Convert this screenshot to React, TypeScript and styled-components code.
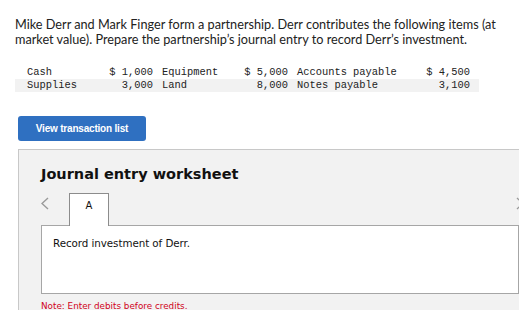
import { FC } from 'react';
import styled, { createGlobalStyle } from 'styled-components';

const GlobalStyle = createGlobalStyle`
    html, body {
        margin: 0;
        padding: 0;
        background: #ffffff;
        overflow: hidden;
    }
`;

const Page = styled.div`
    width: 519px;
    height: 310px;
    overflow: hidden;
    padding: 17px 0 0 15px;
    box-sizing: border-box;
`;

const Question = styled.p`
    margin: 0;
    width: 500px;
    font-family: Lato, 'Open Sans', sans-serif;
    font-size: 12.7px;
    line-height: 15px;
    color: #222222;
`;

const ItemTable = styled.div`
    margin-top: 19px;
    width: 464px;
    font-family: 'Liberation Mono', 'Courier New', monospace;
    font-size: 10.4px;
    color: #222222;
`;

const ItemRow = styled.div<{ $shaded?: boolean }>`
    display: grid;
    grid-template-columns: 91px 51px 83px 52px 128px 59px;
    height: 13px;
    line-height: 13px;
    background: ${({ $shaded }) => ($shaded ? '#f2f2f2' : 'transparent')};
`;

const Label = styled.span<{ $first?: boolean }>`
    padding-left: ${({ $first }) => ($first ? '12px' : '5px')};
    white-space: pre;
`;

const Amount = styled.span<{ $last?: boolean }>`
    text-align: right;
    padding-right: ${({ $last }) => ($last ? '9px' : '4px')};
    white-space: pre;
`;

const ViewButton = styled.button`
    display: block;
    margin: 24px 0 0 3px;
    width: 128px;
    height: 25px;
    padding: 0;
    border: none;
    border-radius: 3px;
    background: #2f70c1;
    color: #ffffff;
    font-family: 'Liberation Sans', Arial, sans-serif;
    font-weight: bold;
    font-size: 10px;
    letter-spacing: -0.2px;
    cursor: pointer;
`;

const Worksheet = styled.div`
    margin: 8px 0 0 3px;
    width: 540px;
    height: 200px;
    box-sizing: border-box;
    background: #f2f2f2;
    border-top: 1px solid #c8c8c8;
    border-left: 1px solid #c8c8c8;
    padding: 15px 0 0 22px;
`;

const Title = styled.h2`
    margin: 0;
    font-family: 'DejaVu Sans', Verdana, sans-serif;
    font-weight: bold;
    font-size: 14.5px;
    line-height: 18px;
    color: #111111;
`;

const TabBar = styled.div`
    display: flex;
    align-items: flex-start;
    margin-top: 10px;
    width: 483px;
    height: 32px;
`;

const Chevron = styled.span<{ $right?: boolean }>`
    display: flex;
    width: 28px;
    justify-content: ${({ $right }) => ($right ? 'flex-end' : 'flex-start')};
    padding-top: 4px;
    ${({ $right }) => ($right ? 'margin-left: auto;' : '')}
`;

const Tab = styled.div`
    width: 40px;
    height: 33px;
    box-sizing: border-box;
    background: #ffffff;
    border: 1px solid #8c8c8c;
    border-bottom: none;
    text-align: center;
    padding-top: 6px;
    font-family: 'DejaVu Sans', Verdana, sans-serif;
    font-size: 10px;
    color: #111111;
    position: relative;
    z-index: 1;
`;

const EntryBox = styled.div`
    width: 478px;
    height: 69px;
    box-sizing: border-box;
    background: #ffffff;
    border: 1px solid #a6a6a6;
    padding: 11px 0 0 11px;
    font-family: 'DejaVu Sans', Verdana, sans-serif;
    font-size: 10.3px;
    letter-spacing: -0.05px;
    color: #111111;
`;

const Note = styled.div`
    margin-top: 7px;
    font-family: 'DejaVu Sans', Verdana, sans-serif;
    font-size: 8.8px;
    color: #d0021b;
`;

type Item = { label: string; amount: string };

const rows: Item[][] = [
    [
        { label: 'Cash', amount: '$ 1,000' },
        { label: 'Equipment', amount: '$ 5,000' },
        { label: 'Accounts payable', amount: '$ 4,500' },
    ],
    [
        { label: 'Supplies', amount: '3,000' },
        { label: 'Land', amount: '8,000' },
        { label: 'Notes payable', amount: '3,100' },
    ],
];

const ChevronIcon: FC<{ right?: boolean }> = ({ right }) => (
    <svg width="8" height="13" viewBox="0 0 8 13">
        <polyline
            points={right ? '1,1 7,6.5 1,12' : '7,1 1,6.5 7,12'}
            fill="none"
            stroke="#9a9a9a"
            strokeWidth="1.4"
        />
    </svg>
);

const App: FC = () => (
    <Page>
        <GlobalStyle />
        <Question>
            Mike Derr and Mark Finger form a partnership. Derr contributes the following items (at
            market value). Prepare the partnership’s journal entry to record Derr’s investment.
        </Question>
        <ItemTable>
            {rows.map((row, i) => (
                <ItemRow key={i} $shaded={i === 1}>
                    {row.map((item, j) => [
                        <Label key={`l${j}`} $first={j === 0}>{item.label}</Label>,
                        <Amount key={`a${j}`} $last={j === row.length - 1}>{item.amount}</Amount>,
                    ])}
                </ItemRow>
            ))}
        </ItemTable>
        <ViewButton>View transaction list</ViewButton>
        <Worksheet>
            <Title>Journal entry worksheet</Title>
            <TabBar>
                <Chevron>
                    <ChevronIcon />
                </Chevron>
                <Tab>A</Tab>
                <Chevron $right>
                    <ChevronIcon right />
                </Chevron>
            </TabBar>
            <EntryBox>Record investment of Derr.</EntryBox>
            <Note>Note: Enter debits before credits.</Note>
        </Worksheet>
    </Page>
);

export default App;
